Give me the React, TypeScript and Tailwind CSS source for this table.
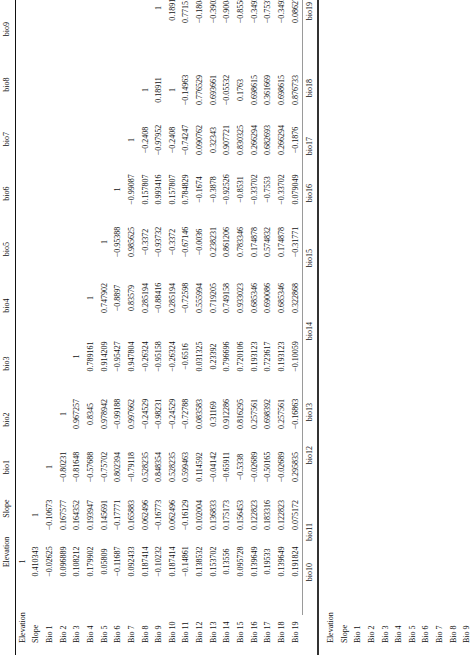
import React from "react";

const MINUS = "\u2212";
const fmt = (s: string) => (s.startsWith("-") ? MINUS + s.slice(1) : s);

const part1: [string, string[]][] = [
  ["Elevation", ["1"]],
  ["Slope", ["0.410343", "1"]],
  ["Bio 1", ["-0.02625", "-0.10673", "1"]],
  ["Bio 2", ["0.096889", "0.167577", "-0.80231", "1"]],
  ["Bio 3", ["0.108212", "0.164352", "-0.81648", "0.967257", "1"]],
  ["Bio 4", ["0.179902", "0.193947", "-0.57688", "0.8345", "0.789161", "1"]],
  ["Bio 5", ["0.05809", "0.145691", "-0.75702", "0.978942", "0.914209", "0.747902", "1"]],
  ["Bio 6", ["-0.11687", "-0.17771", "0.802394", "-0.99188", "-0.95427", "-0.8897", "-0.95388", "1"]],
  ["Bio 7", ["0.092433", "0.165883", "-0.79118", "0.997662", "0.947804", "0.83579", "0.985625", "-0.99087", "1"]],
  ["Bio 8", ["0.187414", "0.062496", "0.528235", "-0.24529", "-0.26324", "0.285194", "-0.3372", "0.157807", "-0.2408", "1"]],
  ["Bio 9", ["-0.10232", "-0.16773", "0.848354", "-0.98231", "-0.95158", "-0.88416", "-0.93732", "0.993416", "-0.97952", "0.18911", "1"]],
  ["Bio 10", ["0.187414", "0.062496", "0.528235", "-0.24529", "-0.26324", "0.285194", "-0.3372", "0.157807", "-0.2408", "1", "0.18911"]],
  ["Bio 11", ["-0.14861", "-0.16129", "0.599463", "-0.72788", "-0.6516", "-0.72598", "-0.67146", "0.784829", "-0.74247", "-0.14963", "0.771518"]],
  ["Bio 12", ["0.138532", "0.102004", "0.114592", "0.083583", "0.031325", "0.555994", "-0.0036", "-0.1674", "0.090762", "0.776529", "-0.18043"]],
  ["Bio 13", ["0.153702", "0.136833", "-0.04142", "0.31169", "0.23392", "0.719205", "0.238231", "-0.3878", "0.32343", "0.693661", "-0.39027"]],
  ["Bio 14", ["0.13556", "0.175173", "-0.65911", "0.912286", "0.796696", "0.749158", "0.861206", "-0.92526", "0.907721", "-0.05532", "-0.90044"]],
  ["Bio 15", ["0.095728", "0.156453", "-0.5338", "0.816295", "0.720106", "0.933023", "0.783346", "-0.8531", "0.830325", "0.1763", "-0.85588"]],
  ["Bio 16", ["0.139649", "0.122823", "-0.02689", "0.257561", "0.193123", "0.685346", "0.174878", "-0.33702", "0.266294", "0.698615", "-0.34934"]],
  ["Bio 17", ["0.19533", "0.183316", "-0.50165", "0.698392", "0.723617", "0.690086", "0.574832", "-0.7553", "0.682693", "0.361669", "-0.75377"]],
  ["Bio 18", ["0.139649", "0.122823", "-0.02689", "0.257561", "0.193123", "0.685346", "0.174878", "-0.33702", "0.266294", "0.698615", "-0.34934"]],
  ["Bio 19", ["0.191824", "0.075172", "0.295835", "-0.16863", "-0.10059", "0.322868", "-0.31771", "0.079049", "-0.1876", "0.876733", "0.086271"]],
];

const headers = ["Elevation", "Slope", "bio1", "bio2", "bio3", "bio4", "bio5", "bio6", "bio7", "bio8", "bio9"];

const part2Labels: [string, string][] = [
  ["bio10", "ml-[68px]"],
  ["bio11", "ml-[10px]"],
  ["bio12", "ml-[47px]"],
  ["bio13", "ml-[13px]"],
  ["bio14", "ml-[51px]"],
  ["bio15", "ml-[43px]"],
  ["bio16", "ml-[35px]"],
  ["bio17", "ml-[17px]"],
  ["bio18", "ml-[28px]"],
  ["bio19", "ml-[47px]"],
];

const part2Rows = ["Elevation", "Slope", "Bio 1", "Bio 2", "Bio 3", "Bio 4", "Bio 5", "Bio 6", "Bio 7", "Bio 8", "Bio 9"];

const ROW_GRID = "grid grid-cols-[70px_47px_46px_50px_56px_59px_58px_54px_51px_48px_52px_112px] h-[13.65px] leading-[13.65px] whitespace-nowrap";

export default function App() {
  return (
    <div className="relative w-[474px] h-[655px] overflow-hidden bg-white">
      <div className="w-[720px] h-[474px] origin-top-left [transform:translateY(655px)_rotate(-90deg)] font-['Liberation_Serif','Times_New_Roman',serif] text-[8px] text-[#111] flex flex-col">
        {/* header row */}
        <div className="grid grid-cols-[80px_46px_41px_42px_53px_59px_57px_56px_55px_54px_55px_56px] h-[16px] items-center whitespace-nowrap">
          <div />
          {headers.map((h) => (
            <div key={h} className="text-center">
              {h}
            </div>
          ))}
        </div>
        <div className="h-px bg-[#111]" />
        {/* part 1 rows */}
        {part1.map(([label, vals]) => (
          <div key={label} className={ROW_GRID}>
            <div className="pl-[12px]">{label}</div>
            {vals.map((v, i) => (
              <div key={i} className="text-center">
                {fmt(v)}
              </div>
            ))}
          </div>
        ))}
        <div className="h-px bg-[#9a9a9a] ml-[40px]" />
        {/* part 2 header (bio10..bio19) */}
        <div className="flex h-[15px] items-center whitespace-nowrap">
          {part2Labels.map(([l, ml]) => (
            <div key={l} className={`${ml} w-[30px] shrink-0 text-center`}>
              {l}
            </div>
          ))}
        </div>
        <div className="h-[2px] bg-[#333]" />
        <div className="pt-[5px] flex flex-col">
          {part2Rows.map((label) => (
            <div key={label} className={ROW_GRID}>
              <div className="pl-[12px]">{label}</div>
            </div>
          ))}
        </div>
      </div>
    </div>
  );
}
